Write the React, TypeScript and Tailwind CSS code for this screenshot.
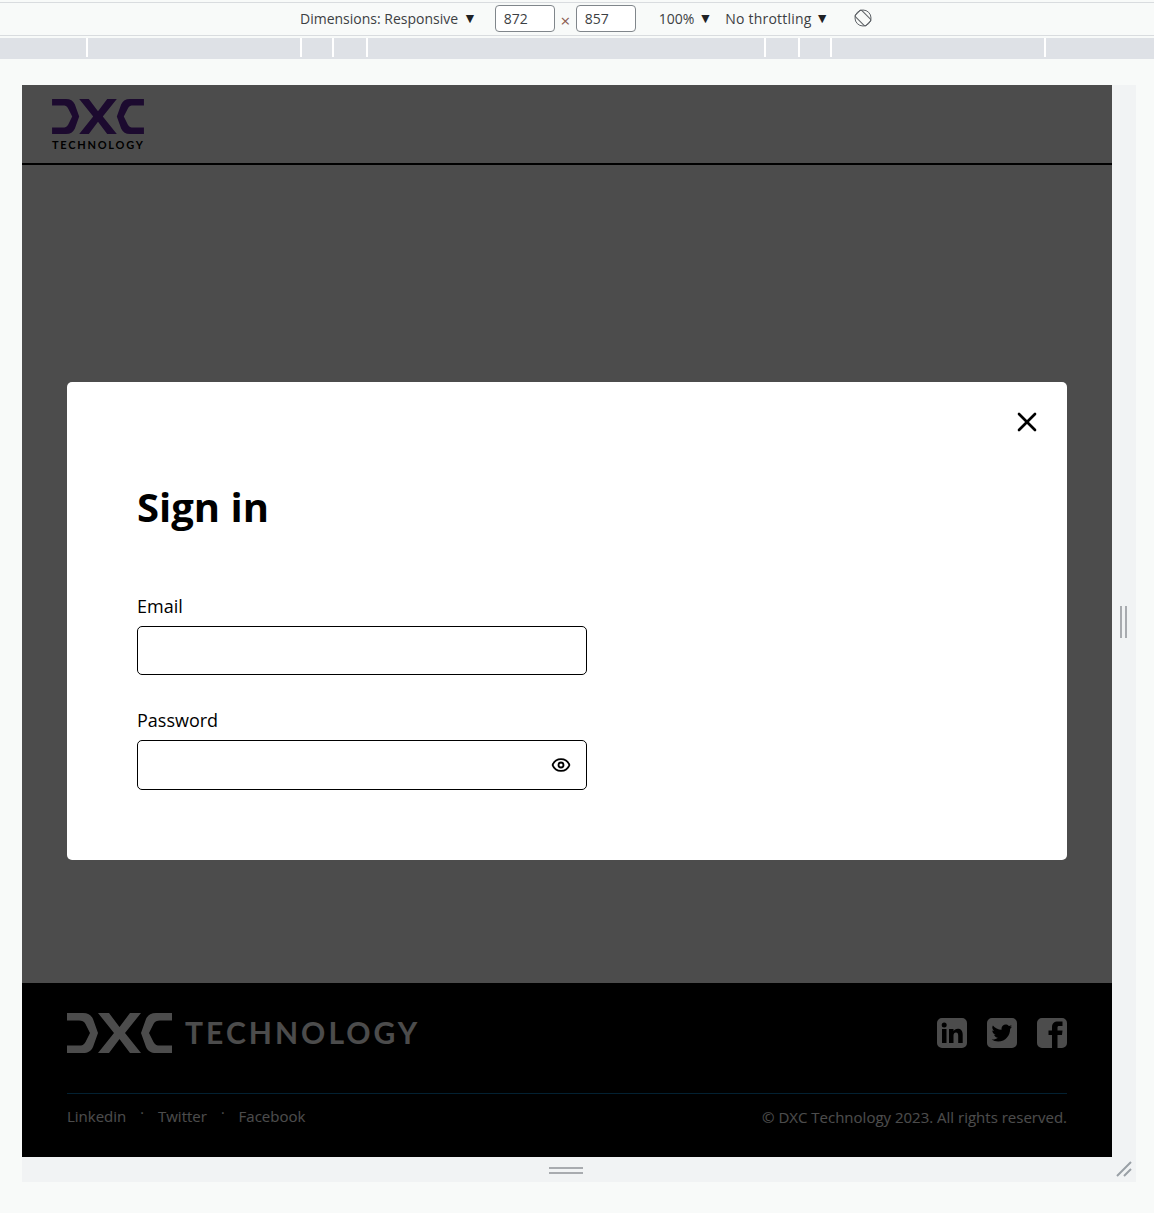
import React from 'react';
import { Eye, X } from 'lucide-react';

const rulerTicks = [88, 214, 32, 34, 398, 34, 32, 214];

// DXC mark, viewBox matches the footer logo at 105x40
const DxcMark: React.FC<{ className?: string }> = ({ className }) => (
  <svg viewBox="0 0 105 40" className={className} fill="currentColor">
    <path d="M0 0H16C21 0 24 2 26 6L31 20L26 34C24 38 21 40 16 40H0V32.5H12C15 32.5 17 32 18.5 29L23 20L18.5 11C17 8 15 7.5 12 7.5H0Z" />
    <path d="M31 0H42L52.5 14L63 0H74L58 20L74 40H63L52.5 26L42 40H31L47 20Z" />
    <path d="M105 0H89C84 0 81 2 79 6L74 20L79 34C81 38 84 40 89 40H105V32.5H93C90 32.5 88 32 86.5 29L82 20L86.5 11C88 8 90 7.5 93 7.5H105Z" />
  </svg>
);

const App: React.FC = () => {
  return (
    <div className="w-[1154px] h-[1213px] bg-[#f8faf9] flex flex-col overflow-hidden font-['Open_Sans',sans-serif]">
      {/* Devtools toolbar */}
      <div className="h-[38px] pt-0.5 shrink-0">
        <div className="h-[34px] pb-0.5 border-y border-[#d9dcdf] flex items-center text-[14px] text-[#3c4043]">
          <span className="ml-[300px] w-[158px] whitespace-nowrap">Dimensions: Responsive</span>
          <span className="ml-[5px] text-[14px] leading-none text-[#202124]">▼</span>
          <div className="ml-[18px] w-[60px] h-[27px] border border-[#80868b] rounded-sm bg-white pl-2 leading-[25px]">872</div>
          <span className="ml-[5px] mt-[5px] w-[11px] text-[17px] leading-none text-[#8a5a50] text-center">×</span>
          <div className="ml-[5px] w-[60px] h-[27px] border border-[#80868b] rounded-sm bg-white pl-2 leading-[25px]">857</div>
          <span className="ml-[23px]">100%</span>
          <span className="ml-[4px] text-[14px] leading-none text-[#202124]">▼</span>
          <span className="ml-[13px] w-[86px] whitespace-nowrap tracking-[0.2px]">No throttling</span>
          <span className="ml-[4px] text-[14px] leading-none text-[#202124]">▼</span>
          <svg viewBox="0 0 18 18" className="ml-[25px] w-[18px] h-[18px] text-[#5f6368]" fill="none" stroke="currentColor" strokeWidth="1">
            <rect x="4.5" y="1.5" width="9" height="15" rx="1.5" transform="rotate(-45 9 9)" />
            <circle cx="9" cy="9" r="8" />
          </svg>
        </div>
      </div>

      {/* Ruler */}
      <div className="h-[21px] bg-[#dee1e6] flex shrink-0">
        {rulerTicks.map((w, i) => (
          <div key={i} className="h-[19px] border-r-2 border-white shrink-0" style={{ width: w }} />
        ))}
      </div>

      {/* Device frame */}
      <div className="mt-[26px] ml-[22px] w-[1114px] h-[1097px] bg-[#f1f3f4] flex flex-col">
        <div className="flex flex-1">
          <div className="relative w-[1090px] h-[1072px] flex flex-col bg-white">
            <header className="h-20 border-b-2 border-black pl-[30px] pt-[14px] shrink-0">
              <DxcMark className="w-[92px] h-[35px] text-[#5f249f]" />
              <p className="mt-[5px] w-[92px] text-[11px] leading-[11px] font-bold tracking-[1.75px] text-black whitespace-nowrap font-['Lato',sans-serif]">TECHNOLOGY</p>
            </header>
            <main className="flex-1" />
            <footer className="h-[174px] bg-black px-[45px] pt-[30px] shrink-0">
              <div className="h-[81px] border-b border-[#0b6ea8] flex justify-between">
                <div className="flex items-start">
                  <DxcMark className="w-[105px] h-10 text-white" />
                  <span className="ml-[13px] mt-[1px] text-[30px] leading-[36px] font-bold tracking-[3.05px] text-white font-['Lato',sans-serif]">TECHNOLOGY</span>
                </div>
                <div className="flex gap-5 mt-[5px]">
                  {/* LinkedIn */}
                  <svg viewBox="0 0 30 30" className="w-[30px] h-[30px] text-white">
                    <path fill="currentColor" fillRule="evenodd" d="M5 0H25A5 5 0 0 1 30 5V25A5 5 0 0 1 25 30H5A5 5 0 0 1 0 25V5A5 5 0 0 1 5 0ZM5 11V25H9.5V11ZM7.2 4.5A2.5 2.5 0 1 0 7.2 9.5A2.5 2.5 0 1 0 7.2 4.5ZM12 11V25H16.5V17.5C16.5 15.5 17.5 14.5 19 14.5C20.5 14.5 21.2 15.5 21.2 17.5V25H25.7V16.5C25.7 12.5 23.7 10.7 20.8 10.7C18.8 10.7 17.3 11.7 16.5 13V11Z" />
                  </svg>
                  {/* Twitter */}
                  <svg viewBox="0 0 30 30" className="w-[30px] h-[30px] text-white">
                    <path fill="currentColor" fillRule="evenodd" d="M5 0H25A5 5 0 0 1 30 5V25A5 5 0 0 1 25 30H5A5 5 0 0 1 0 25V5A5 5 0 0 1 5 0ZM25 8.6C24.2 9 23.5 9.2 22.6 9.3C23.5 8.8 24.2 7.9 24.5 6.9C23.7 7.4 22.8 7.8 21.8 8C21 7.1 19.9 6.6 18.7 6.6C16.4 6.6 14.5 8.5 14.5 10.8C14.5 11.1 14.5 11.5 14.6 11.8C11.1 11.6 8 9.9 5.9 7.4C5.5 8 5.3 8.8 5.3 9.5C5.3 11 6.1 12.3 7.2 13C6.5 13 5.9 12.8 5.3 12.5V12.6C5.3 14.6 6.7 16.3 8.7 16.7C8.3 16.8 7.6 16.9 7 16.8C7.5 18.4 9 19.6 10.9 19.7C9.4 20.8 7.6 21.5 5.6 21.5C5.2 21.5 4.9 21.5 4.6 21.4C6.5 22.7 8.7 23.4 11.1 23.4C18.9 23.4 23.1 17 23.1 11.4V10.9C23.9 10.3 24.5 9.5 25 8.6Z" />
                  </svg>
                  {/* Facebook */}
                  <svg viewBox="0 0 30 30" className="w-[30px] h-[30px] text-white">
                    <path fill="currentColor" fillRule="evenodd" d="M5 0H25A5 5 0 0 1 30 5V25A5 5 0 0 1 25 30H5A5 5 0 0 1 0 25V5A5 5 0 0 1 5 0ZM15 30V17H11.5V12.5H15V9C15 5.5 17 3.5 21 3.5H25.5V8H22C21 8 20.5 8.5 20.5 9.5V12.5H25.5L25 17H20.5V30Z" />
                  </svg>
                </div>
              </div>
              <div className="flex justify-between items-start text-white">
                <nav className="flex items-center text-[15px] leading-5 mt-[12px]">
                  <a>Linkedin</a>
                  <span className="mx-[14px] text-[14px] -mt-[6px]">·</span>
                  <a>Twitter</a>
                  <span className="mx-[14px] text-[14px] -mt-[6px]">·</span>
                  <a>Facebook</a>
                </nav>
                <p className="text-[15px] leading-5 mt-[13px]">© DXC Technology 2023. All rights reserved.</p>
              </div>
            </footer>

            {/* Sign in dialog over dimmed page */}
            <div className="absolute inset-0 bg-[rgba(0,0,0,0.7)] flex items-center justify-center">
              <div className="relative w-[1000px] h-[478px] bg-white rounded-[5px] pl-[70px] pt-[97px] text-black">
                <button className="absolute top-[28px] right-[28px] w-6 h-6 flex items-center justify-center">
                  <X size={32} strokeWidth={2} className="shrink-0" />
                </button>
                <h1 className="text-[40px] leading-[56px] font-bold">Sign in</h1>
                <label className="block mt-[59px] text-[18px] leading-[24px]">Email</label>
                <div className="mt-[8px] w-[450px] h-[49px] border border-black rounded-[5px]" />
                <label className="block mt-[33px] text-[18px] leading-[24px]">Password</label>
                <div className="mt-[8px] w-[450px] h-[50px] border border-black rounded-[5px] flex items-center justify-end pr-[15px]">
                  <Eye size={20} strokeWidth={2.2} />
                </div>
              </div>
            </div>
          </div>

          {/* Right resize handle */}
          <div className="flex-1 flex items-start justify-center pt-[521px] pr-0.5">
            <div className="w-[7px] h-8 border-x-2 border-[#a8abaf]" />
          </div>
        </div>

        {/* Bottom resize handle */}
        <div className="h-[25px] relative flex items-center justify-center pt-0.5">
          <div className="ml-[-26px] w-[34px] h-[7px] border-y-2 border-[#a8abaf]" />
          <svg viewBox="0 0 16 16" className="absolute right-[4px] top-[4px] w-4 h-4 text-[#9aa0a6]" stroke="currentColor" strokeWidth="2">
            <path d="M1 15L15 1M8 15L15 8" />
          </svg>
        </div>
      </div>
    </div>
  );
};

export default App;
